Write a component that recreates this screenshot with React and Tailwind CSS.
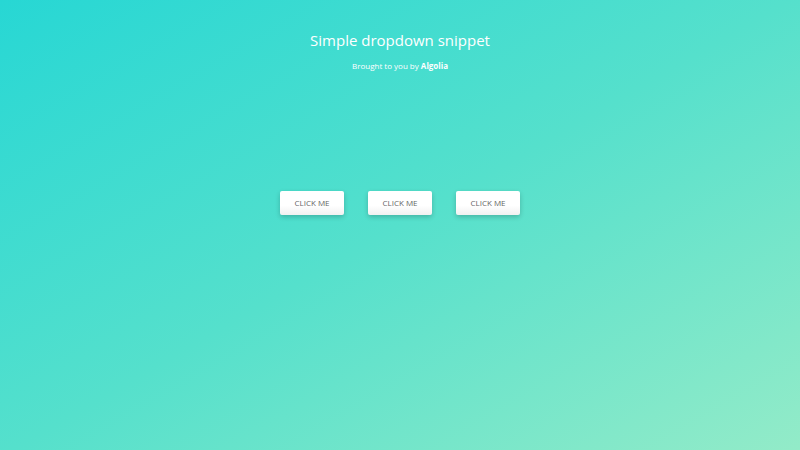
import React from 'react';

const Button = ({ label }) => (
  <button className="w-16 h-6 bg-[linear-gradient(180deg,#ffffff_60%,#f1f1f1_100%)] rounded-[2px] text-[8px] uppercase text-[#666] shadow-[0_2px_5px_rgba(0,0,0,0.2)]">
    {label}
  </button>
);

export default function App() {
  return (
    <div
      className="w-[800px] h-[450px] flex flex-col items-center bg-[linear-gradient(150deg,#27d7d4_0%,#55e0cc_50%,#93ebc8_100%)] text-white"
      style={{ fontFamily: '"Open Sans", sans-serif' }}
    >
      <h1 className="mt-[28px] text-[15px] leading-6">Simple dropdown snippet</h1>
      <p className="mt-[8px] text-[8px] leading-3">
        Brought to you by <span className="font-bold">Algolia</span>
      </p>
      <div className="mt-[119px] flex gap-6">
        <Button label="Click me" />
        <Button label="Click me" />
        <Button label="Click me" />
      </div>
    </div>
  );
}
